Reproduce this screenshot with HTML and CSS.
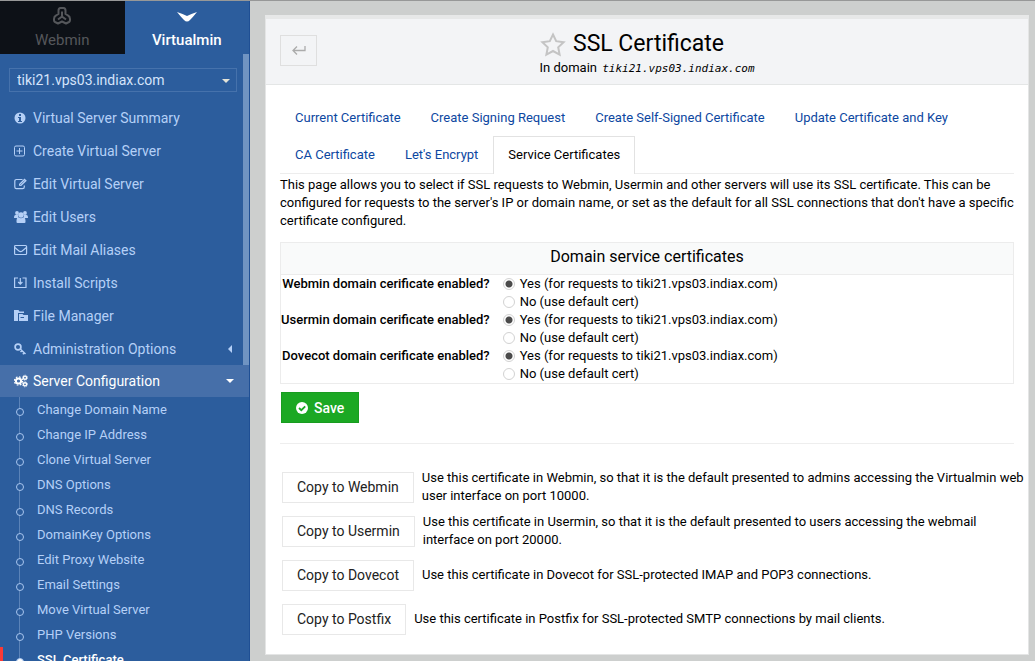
FILE: index.html
```html
<!DOCTYPE html>
<html lang="en">
<head>
    <meta charset="UTF-8">
    <meta name="viewport" content="width=device-width, initial-scale=1.0">
    <title>SSL Certificate - Virtualmin</title>
    <link rel="stylesheet" href="styles.css">
</head>
<body>
    <aside class="sidebar">
        <nav class="switch">
            <a href="#webmin" class="product">
                <svg width="18" height="18" viewBox="0 0 18 18" fill="none" stroke="currentColor" stroke-width="2" stroke-linejoin="round">
                    <path d="M5.500 7V3.500Q5.500 1 7.500 1H10.500Q12.500 1 12.500 3.500V7L15 8.500Q17 9.500 17 12V13Q17 15 15 15.500L13 16.500L9 14.500L5 16.500L3 15.500Q1 15 1 13V12Q1 9.500 3 8.500ZM9 4.500V9.500M9 9.500L5 12.500M9 9.500L13 12.500"/>
                </svg>
                <span>Webmin</span>
            </a>
            <a href="#virtualmin" class="product active">
                <svg width="20" height="18" viewBox="0 0 20 18" fill="currentColor">
                    <path d="M0 5Q6 7 10 9Q14 7 20 5Q16 10 13 13Q10 16 7 13Q4 10 0 5Z"/>
                </svg>
                <span>Virtualmin</span>
            </a>
        </nav>
        <div class="menu-area">
            <div class="domain-box">
                <select class="domain" aria-label="Domain">
                    <option>tiki21.vps03.indiax.com</option>
                </select>
            </div>
            <ul class="menu">
                <li><a href="#summary">
                    <svg class="icon" viewBox="0 0 14 14"><circle cx="6" cy="7" r="5.500" fill="currentColor"/><path d="M5 3h2v2H5zM4 6h3v4h1v1H4v-1h1V7H4z" fill="#2c5d9d"/></svg>
                    Virtual Server Summary</a></li>
                <li><a href="#create">
                    <svg class="icon" viewBox="0 0 14 14" fill="none" stroke="currentColor"><rect x=".5" y="2" width="10" height="10" rx="1.500"/><path d="M5.500 4v6M2.500 7h6"/></svg>
                    Create Virtual Server</a></li>
                <li><a href="#edit">
                    <svg class="icon" viewBox="0 0 14 14" fill="none" stroke="currentColor" stroke-width="1.200"><path d="M8.500 2.500H2.500Q.8 2.500.8 4.200V10Q.8 11.700 2.500 11.700H8.500Q10.300 11.700 10.300 10V8.500"/><path d="M5 9V7L10.500 1.500L12.800 3.700L7.200 9Z" fill="currentColor" stroke="none"/><path d="M5.600 8.500L10.500 3.700" stroke="#2c5d9d" stroke-width=".6"/></svg>
                    Edit Virtual Server</a></li>
                <li><a href="#users">
                    <svg class="icon" viewBox="0 0 14 14" fill="currentColor"><circle cx="3" cy="3" r="1.900"/><circle cx="11" cy="3" r="1.900"/><path d="M0 8Q0 5 1.500 5H4V8ZM14 8Q14 5 12.500 5H10V8Z"/><circle cx="7" cy="5" r="2.800"/><path d="M2.500 12Q2.300 7.500 4.500 7.300Q7 9 9.500 7.300Q11.700 7.500 11.500 12Q11.500 13 10.500 13H3.500Q2.500 13 2.500 12Z"/></svg>
                    Edit Users</a></li>
                <li><a href="#aliases">
                    <svg class="icon" viewBox="0 0 14 14" fill="none" stroke="currentColor" stroke-width="1.200"><rect x=".6" y="2.500" width="12" height="9" rx="1"/><path d="M.8 4.500L5 8Q6.600 9.200 8.200 8L12.400 4.500"/></svg>
                    Edit Mail Aliases</a></li>
                <li><a href="#scripts">
                    <svg class="icon" viewBox="0 0 14 14" fill="none" stroke="currentColor" stroke-width="1.200"><path d="M4 2H.6V11.500H12V2H8.500M6.300 2V8M4.200 6L6.300 8.200L8.400 6"/></svg>
                    Install Scripts</a></li>
                <li><a href="#files">
                    <svg class="icon" viewBox="0 0 14 14" fill="currentColor"><path d="M0 1H4.500L5.500 2.500H10V4H4V12H0Z"/><path d="M5 5H8.500L9.500 6H14V12H5ZM6.500 8V9H10V8Z" fill-rule="evenodd"/></svg>
                    File Manager</a></li>
                <li><a href="#administration">
                    <svg class="icon" viewBox="0 0 14 14" fill="none" stroke="currentColor" stroke-width="1.700"><circle cx="4" cy="5" r="2.900"/><path d="M6.300 7L11.500 12M8 8.500L6.500 10M10.300 10.800L8.800 12.300" stroke-width="1.500"/></svg>
                    Administration Options
                    <svg class="caret" viewBox="0 0 8 8" fill="currentColor"><path d="M2 4L6 0V8Z"/></svg></a></li>
                <li class="open"><a href="#configuration">
                    <svg class="icon" viewBox="0 0 14 14" fill="none" stroke="currentColor"><circle cx="4.500" cy="7" r="2.600" stroke-width="2"/><circle cx="4.500" cy="7" r="4.100" stroke-width="1.200" stroke-dasharray="1.700 1.520"/><circle cx="11" cy="3.700" r="1.600" stroke-width="1.400"/><circle cx="11" cy="3.700" r="2.500" stroke-width=".8" stroke-dasharray="1.100 .86"/><circle cx="11" cy="10.300" r="1.600" stroke-width="1.400"/><circle cx="11" cy="10.300" r="2.500" stroke-width=".8" stroke-dasharray="1.100 .86"/></svg>
                    Server Configuration
                    <svg class="caret" viewBox="0 0 8 8" fill="currentColor"><path d="M0 2H8L4 6Z"/></svg></a>
                    <ul class="submenu">
                        <li><a href="#domain-name">Change Domain Name</a></li>
                        <li><a href="#ip">Change IP Address</a></li>
                        <li><a href="#clone">Clone Virtual Server</a></li>
                        <li><a href="#dns-options">DNS Options</a></li>
                        <li><a href="#dns-records">DNS Records</a></li>
                        <li><a href="#domainkey">DomainKey Options</a></li>
                        <li><a href="#proxy">Edit Proxy Website</a></li>
                        <li><a href="#email">Email Settings</a></li>
                        <li><a href="#move">Move Virtual Server</a></li>
                        <li><a href="#php">PHP Versions</a></li>
                        <li class="current"><a href="#ssl">SSL Certificate</a></li>
                    </ul>
                </li>
            </ul>
        </div>
    </aside>

    <main class="panel">
        <header class="panel-head">
            <button type="button" class="back" aria-label="Back">
                <svg width="14" height="10" viewBox="0 0 14 10" fill="none" stroke="currentColor" stroke-width="1.300"><path d="M13 1V5.500H1M5 1.500L1 5.500L5 9.500"/></svg>
            </button>
            <div class="heading">
                <h1>
                    <svg width="26" height="25" viewBox="0 0 26 25" fill="none" stroke="#c4c4c4" stroke-width="2"><path d="M13 2.500L16.200 9.200L23.600 10.200L18.200 15.300L19.600 22.600L13 19L6.400 22.600L7.800 15.300L2.400 10.200L9.800 9.200Z"/></svg>
                    SSL Certificate
                </h1>
                <p>In domain <em>tiki21.vps03.indiax.com</em></p>
            </div>
        </header>

        <div class="panel-body">
            <nav class="tabs">
                <a href="#current">Current Certificate</a>
                <a href="#signing">Create Signing Request</a>
                <a href="#self">Create Self-Signed Certificate</a>
                <a href="#update">Update Certificate and Key</a>
                <a href="#ca">CA Certificate</a>
                <a href="#lets">Let's Encrypt</a>
                <a href="#service" class="active">Service Certificates</a>
            </nav>

            <p class="intro">This page allows you to select if SSL requests to Webmin, Usermin and other servers will use its SSL certificate. This can be configured for requests to the server's IP or domain name, or set as the default for all SSL connections that don't have a specific certificate configured.</p>

            <form>
                <table class="settings">
                    <thead>
                        <tr><th colspan="2">Domain service certificates</th></tr>
                    </thead>
                    <tbody>
                        <tr>
                            <th scope="row">Webmin domain cerificate enabled?</th>
                            <td>
                                <label><input type="radio" name="webmin" checked>Yes (for requests to tiki21.vps03.indiax.com)</label>
                                <label><input type="radio" name="webmin">No (use default cert)</label>
                            </td>
                        </tr>
                        <tr>
                            <th scope="row">Usermin domain cerificate enabled?</th>
                            <td>
                                <label><input type="radio" name="usermin" checked>Yes (for requests to tiki21.vps03.indiax.com)</label>
                                <label><input type="radio" name="usermin">No (use default cert)</label>
                            </td>
                        </tr>
                        <tr>
                            <th scope="row">Dovecot domain cerificate enabled?</th>
                            <td>
                                <label><input type="radio" name="dovecot" checked>Yes (for requests to tiki21.vps03.indiax.com)</label>
                                <label><input type="radio" name="dovecot">No (use default cert)</label>
                            </td>
                        </tr>
                    </tbody>
                </table>
                <button type="button" class="save">
                    <svg width="12" height="12" viewBox="0 0 12 12"><circle cx="6" cy="6" r="6" fill="#fff"/><path d="M3 6L5.300 8.200L9.200 4.300" fill="none" stroke="#1ba823" stroke-width="1.800"/></svg>
                    Save
                </button>
            </form>

            <div class="copy-list">
                <div class="copy-row">
                    <button type="button">Copy to Webmin</button>
                    <p>Use this certificate in Webmin, so that it is the default presented to admins accessing the Virtualmin web user interface on port 10000.</p>
                </div>
                <div class="copy-row">
                    <button type="button">Copy to Usermin</button>
                    <p>Use this certificate in Usermin, so that it is the default presented to users accessing the webmail interface on port 20000.</p>
                </div>
                <div class="copy-row">
                    <button type="button">Copy to Dovecot</button>
                    <p>Use this certificate in Dovecot for SSL-protected IMAP and POP3 connections.</p>
                </div>
                <div class="copy-row">
                    <button type="button">Copy to Postfix</button>
                    <p>Use this certificate in Postfix for SSL-protected SMTP connections by mail clients.</p>
                </div>
            </div>
        </div>
    </main>
</body>
</html>
```
FILE: styles.css
```css
* {
    box-sizing: border-box;
}
body {
    margin: 0;
    height: 100vh;
    display: grid;
    grid-template-columns: 250px 1fr;
    align-items: start;
    overflow: hidden;
    border-top: 1px solid #979898;
    background: #cdcfce;
    color: #000;
    font-family: Roboto, sans-serif;
    font-size: 13px;
    line-height: 18px;
}
h1, p, ul {
    margin: 0;
    padding: 0;
}
ul {
    list-style: none;
}
a {
    text-decoration: none;
}
button, select {
    font-family: inherit;
}

/* sidebar */
.sidebar {
    height: 100%;
    min-height: 0;
    overflow: hidden;
    background: #2c5d9d;
    border-right: 1px solid #1f4f94;
}
.switch {
    display: grid;
    grid-template-columns: 1fr 1fr;
}
.product {
    display: flex;
    flex-direction: column;
    align-items: center;
    gap: 5px;
    height: 53px;
    padding-top: 6px;
    background: #0d1117;
    color: #55575b;
    font-size: 15px;
    line-height: 20px;
}
.product.active {
    background: #2c5d9d;
    color: #fff;
    font-weight: 500;
}
.menu-area {
    position: relative;
}
/* scrollbar thumb */
.menu-area::after {
    content: "";
    position: absolute;
    top: 0;
    right: 0;
    width: 6px;
    height: 311px;
    background: #7094c2;
}
.domain-box {
    position: relative;
    padding: 14px 12px 9px 9px;
}
.domain-box::after {
    content: "";
    position: absolute;
    top: 25px;
    right: 19px;
    border: 4px solid transparent;
    border-top-color: #e3e3d8;
    border-bottom: 0;
}
.domain {
    display: block;
    width: 100%;
    height: 24px;
    padding: 0 7px;
    appearance: none;
    border: 1px solid #4672ac;
    border-radius: 0;
    background: none;
    color: #d5e4fb;
    font-size: 14px;
}
.menu > li > a {
    display: flex;
    align-items: center;
    height: 33px;
    padding: 0 15px 0 14px;
    color: #b5d0f7;
    font-size: 14px;
}
.icon {
    width: 14px;
    height: 14px;
    margin-right: 5px;
}
.caret {
    width: 8px;
    height: 8px;
    margin-left: auto;
}
.menu > .open > a {
    height: 32px;
    background: #466fa9;
    color: #fff;
}
.submenu {
    position: relative;
}
.submenu::before {
    content: "";
    position: absolute;
    top: 0;
    bottom: 0;
    left: 19px;
    border-left: 1px solid #5b83b8;
}
.submenu li {
    position: relative;
    height: 25px;
    padding-left: 37px;
    line-height: 25px;
}
.submenu li::before {
    content: "";
    position: absolute;
    top: 11px;
    left: 16px;
    width: 6px;
    height: 6px;
    border: 1px solid #a9c6ef;
    border-radius: 50%;
    background: #2c5d9d;
}
.submenu a {
    color: #b5d0f7;
}
.submenu .current {
    border-left: 3px solid #fb3a35;
    padding-left: 34px;
}
.submenu .current::before {
    left: 13px;
    background: #fff;
}
.submenu .current a {
    color: #fff;
    font-weight: 500;
}

/* content panel */
.panel {
    margin: 14px 6px 6px 15px;
    border: 1px solid #e4e5e5;
    border-top: 4px solid #e7e8e8;
    background: #fff;
}
.panel-head {
    position: relative;
    padding: 10px 14px 6px;
    border-bottom: 1px solid #e4e6e6;
    background: #f3f4f6;
    text-align: center;
}
.back {
    position: absolute;
    top: 16px;
    left: 14px;
    width: 37px;
    height: 31px;
    padding: 0;
    border: 1px solid #dfdfdf;
    background: transparent;
    color: #ababab;
}
.heading h1 {
    display: flex;
    justify-content: center;
    align-items: center;
    gap: 7px;
    padding-right: 30px;
    font-size: 23px;
    font-weight: 400;
    line-height: 30px;
}
.heading em {
    margin-left: 2px;
    font-family: "DejaVu Sans Mono", monospace;
    font-size: 11px;
}
.panel-body {
    padding: 14px 14px 17px;
}
.tabs {
    display: flex;
    flex-wrap: wrap;
    border-bottom: 1px solid #ededed;
}
.tabs a {
    padding: 9px 14px;
    border: 1px solid transparent;
    border-bottom: 0;
    color: #0d47a1;
}
.tabs .active {
    margin-bottom: -1px;
    border-color: #e2e2e2;
    background: #fff;
    color: #000;
}
.intro {
    margin: 2px -8px 12px 0;
}
.settings {
    width: 100%;
    border: 1px solid #ececec;
    border-collapse: collapse;
}
.settings thead th {
    height: 32px;
    padding: 0 0 4px;
    border-bottom: 1px solid #ececec;
    background: #f9fafa;
    font-size: 16px;
    font-weight: 400;
}
.settings tbody th {
    width: 208px;
    padding: 0;
    font-weight: 500;
    text-align: right;
    vertical-align: top;
    white-space: nowrap;
}
.settings td {
    padding: 0 0 0 13px;
}
.settings label {
    display: flex;
    align-items: center;
    gap: 5px;
}
.settings input {
    width: 12px;
    height: 12px;
    margin: 0;
    appearance: none;
    border: 1px solid #d2d2d2;
    border-radius: 50%;
    background: #fff;
}
.settings input:checked {
    background: radial-gradient(circle, #4b4b4b 3px, #fff 4px);
}
.save {
    display: flex;
    align-items: center;
    gap: 6px;
    height: 31px;
    margin: 8px 0 20px 1px;
    padding: 0 14px;
    border: 1px solid #189c20;
    background: #1ba823;
    color: #fff;
    font-size: 14px;
    font-weight: 500;
}
.copy-list {
    display: grid;
    gap: 8px;
    padding: 25px 0 0 2px;
    border-top: 1px solid #eee;
}
.copy-row {
    display: flex;
    align-items: center;
    gap: 8px;
    min-height: 36px;
    margin-right: -12px;
}
.copy-row button {
    flex: none;
    height: 31px;
    padding: 0 14px;
    border: 1px solid #e8e8e8;
    background: #fff;
    color: #222;
    font-size: 14px;
}
```
